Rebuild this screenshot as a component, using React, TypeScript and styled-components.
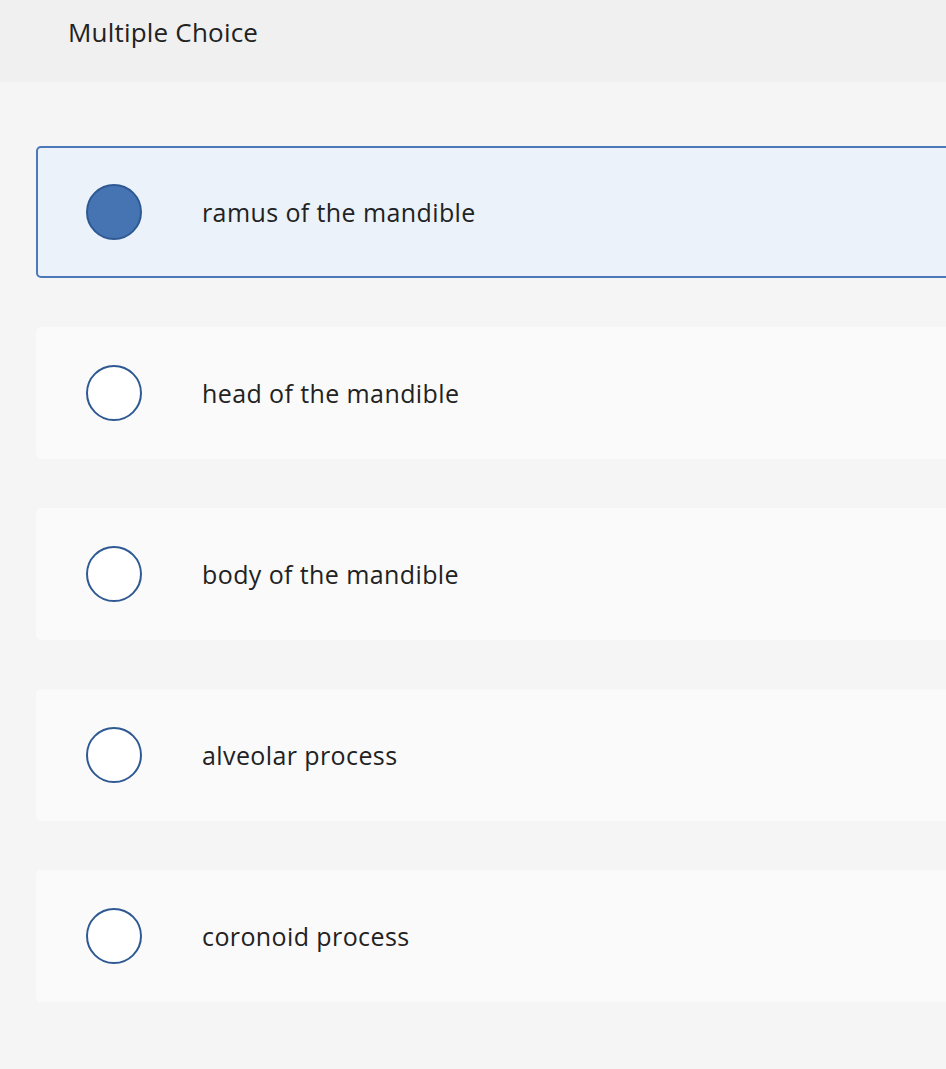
import styled, { createGlobalStyle } from 'styled-components'

const GlobalStyle = createGlobalStyle`
  html, body {
    margin: 0;
    padding: 0;
    background: #f5f5f5;
    font-family: "Open Sans", Lato, "Liberation Sans", sans-serif;
    color: #222;
  }
`

const options = [
  'ramus of the mandible',
  'head of the mandible',
  'body of the mandible',
  'alveolar process',
  'coronoid process',
]

export default function App() {
  const selected = 0
  return (
    <Page>
      <GlobalStyle />
      <Header>
        <h2>Multiple Choice</h2>
      </Header>
      <Choices>
        {options.map((label, i) => (
          <Choice key={label} $selected={i === selected}>
            <Radio $selected={i === selected} />
            <span>{label}</span>
          </Choice>
        ))}
      </Choices>
    </Page>
  )
}

const Page = styled.div`
  width: 946px;
  min-height: 1069px;
  overflow: hidden;
  background: #f5f5f5;
`

const Header = styled.header`
  height: 82px;
  background: #f0f0f0;
  padding-left: 68px;
  box-sizing: border-box;

  h2 {
    margin: 0;
    padding-top: 14px;
    font-size: 26px;
    font-weight: 400;
    letter-spacing: 0.2px;
    line-height: 36px;
    color: #222;
  }
`

const Choices = styled.div`
  display: flex;
  flex-direction: column;
  gap: 49px;
  padding: 64px 0 0 36px;
`

const Choice = styled.label<{ $selected: boolean }>`
  display: flex;
  align-items: center;
  width: 1000px;
  height: 132px;
  box-sizing: border-box;
  padding-left: 48px;
  border-radius: 5px;
  border: 2px solid ${p => (p.$selected ? '#4a78b8' : 'transparent')};
  background: ${p => (p.$selected ? '#ebf2fa' : '#fafafa')};
  cursor: pointer;

  span {
    margin-left: 60px;
    font-size: 25px;
    letter-spacing: 0.4px;
    color: #222;
  }
`

const Radio = styled.span<{ $selected: boolean }>`
  flex: none;
  width: 56px;
  height: 56px;
  box-sizing: border-box;
  border-radius: 50%;
  border: 2px solid #2f5993;
  background: ${p => (p.$selected ? '#4673b1' : '#fff')};
  && {
    margin-left: 0;
  }
`
